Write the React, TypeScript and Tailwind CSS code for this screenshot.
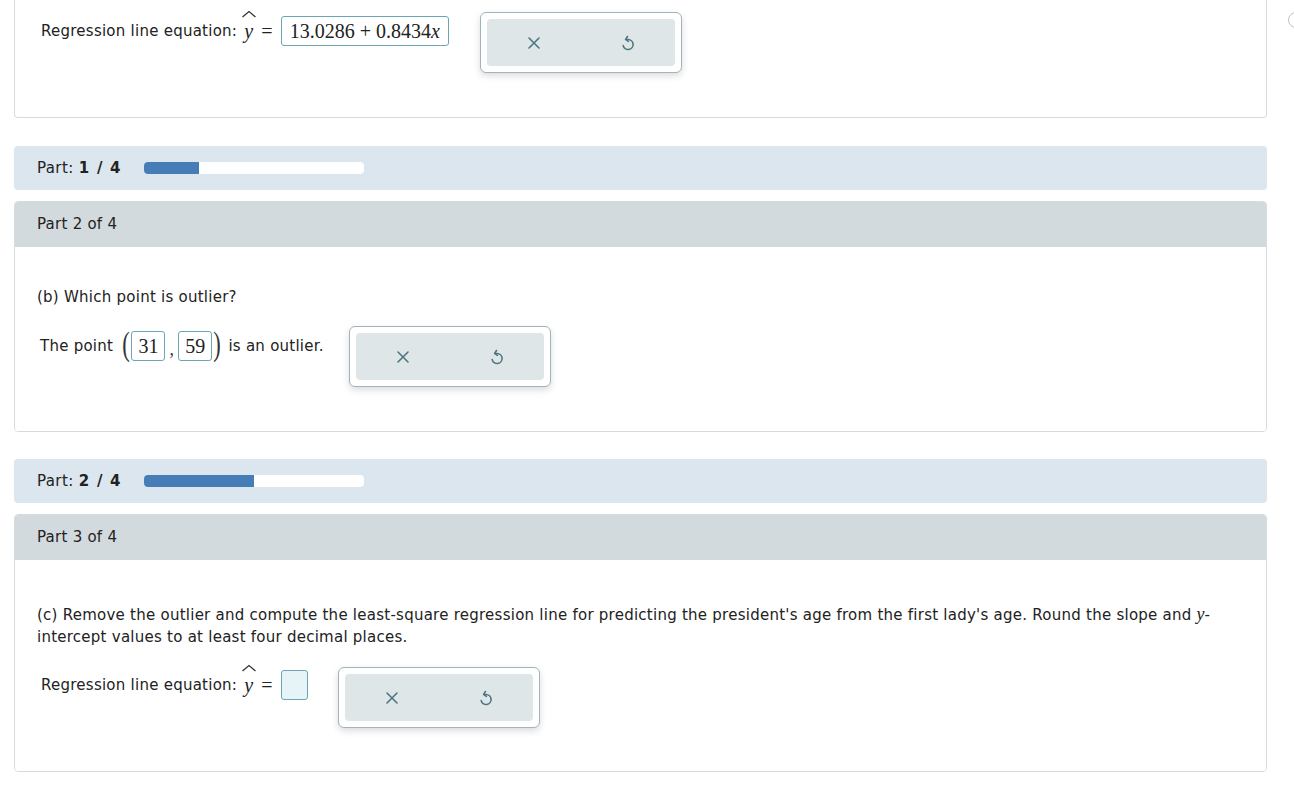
import React from 'react';

const textFont = { fontFamily: '"DejaVu Sans", Verdana, sans-serif' };
const mathFont = { fontFamily: '"Liberation Serif", "Times New Roman", serif' };

function Hat() {
  return (
    <span className="relative inline-block">
      <svg
        className="absolute left-1/2 -translate-x-1/2 -top-[6px]"
        width="15"
        height="8"
        viewBox="0 0 15 8"
        fill="none"
      >
        <path d="M1 7 L7.5 1.5 L14 7" stroke="#333" strokeWidth="1.3" />
      </svg>
      <span className="italic">y</span>
    </span>
  );
}

function YHat() {
  return (
    <span className="inline-flex items-center gap-[8px] text-[20px] text-[#222] ml-[7px] mr-[8px]" style={mathFont}>
      <Hat />
      <span>=</span>
    </span>
  );
}

function MathBox({ children, className = '' }: { children?: React.ReactNode; className?: string }) {
  return (
    <span
      className={
        'inline-flex items-center justify-center h-[30px] border-[1.5px] border-[#6aa6b6] rounded-[3px] text-[20px] text-[#222] tracking-normal ' +
        className
      }
      style={mathFont}
    >
      {children}
    </span>
  );
}

function XIcon() {
  return (
    <svg width="14" height="14" viewBox="0 0 14 14" fill="none">
      <path d="M2 2 L12 12 M12 2 L2 12" stroke="#4e7582" strokeWidth="1.6" strokeLinecap="round" />
    </svg>
  );
}

function UndoIcon() {
  return (
    <svg width="14" height="16" viewBox="0 0 14 16" fill="none">
      <path d="M5 4.5 H7 A5 5 0 1 1 2.2 10.5" stroke="#4e7582" strokeWidth="1.6" strokeLinecap="round" />
      <path
        d="M6.5 1.5 L4.6 4.4 L7.4 6.3"
        stroke="#4e7582"
        strokeWidth="1.6"
        strokeLinecap="round"
        strokeLinejoin="round"
      />
    </svg>
  );
}

function ActionBox({ className = '' }: { className?: string }) {
  return (
    <div
      className={
        'w-[202px] h-[61px] p-[6px] bg-white border border-[#9fb4bc] rounded-[6px] shadow-[0_3px_7px_rgba(0,0,0,0.14)] ' +
        className
      }
    >
      <div className="grid grid-cols-2 h-full bg-[#dfe6e8] rounded-[4px]">
        <div className="flex items-center justify-center">
          <XIcon />
        </div>
        <div className="flex items-center justify-center">
          <UndoIcon />
        </div>
      </div>
    </div>
  );
}

function Progress({ part, pct, className = '' }: { part: number; pct: number; className?: string }) {
  return (
    <div
      className={
        'flex items-center h-[44px] bg-[#dbe6ef] rounded-[4px] pl-[23px] text-[15px] tracking-[0.4px] text-[#222] ' +
        className
      }
    >
      <span className="w-[107px]">
        Part: <span className="font-bold tracking-[1.2px]">{part}&nbsp;/&nbsp;4</span>
      </span>
      <div className="w-[220px] h-[12px] bg-white rounded-[4px] overflow-hidden">
        <div className="h-full bg-[#477db7]" style={{ width: `${pct}%` }} />
      </div>
    </div>
  );
}

function PartCard({
  title,
  children,
  bodyClass,
  className = '',
}: {
  title: string;
  children: React.ReactNode;
  bodyClass: string;
  className?: string;
}) {
  return (
    <div className={'border border-[#d5dcdf] rounded-[4px] overflow-hidden ' + className}>
      <div className="h-[45px] bg-[#d2dadd] flex items-center pl-[22px] text-[15px] tracking-[0.25px] text-[#222]">
        {title}
      </div>
      <div className={'bg-white pl-[22px] pr-[22px] ' + bodyClass}>{children}</div>
    </div>
  );
}

export default function App() {
  return (
    <div className="relative w-[1294px] min-h-[795px] bg-white" style={textFont}>
      <div className="absolute left-[1288px] top-[12px] w-[16px] h-[16px] rounded-full border border-[#b9c6cc]" />
      <div className="ml-[14px] w-[1253px] flex flex-col">
        {/* top card, cut off at the top */}
        <div className="border border-t-0 border-[#d5dcdf] rounded-b-[4px] pl-[26px] pt-[12px] pb-[44px]">
          <div className="flex items-start">
            <div className="flex items-center mt-[4px] text-[15px] tracking-[0.25px] text-[#222]">
              <span>Regression line equation:</span>
              <YHat />
              <MathBox className="px-[8px]">
                13.0286 + 0.8434<span className="italic">x</span>
              </MathBox>
            </div>
            <ActionBox className="ml-[31px]" />
          </div>
        </div>

        <Progress part={1} pct={25} className="mt-[28px]" />

        <PartCard title="Part 2 of 4" bodyClass="pt-[39px] pb-[44px]" className="mt-[11px]">
          <p className="text-[15px] tracking-[0.25px] leading-[22px] text-[#222]">(b) Which point is outlier?</p>
          <div className="flex items-start mt-[18px] pl-[3px]">
            <div className="flex items-center mt-[5px] text-[15px] tracking-[0.25px] text-[#222]">
              <span>The point</span>
              <span className="flex items-center ml-[8px] text-[#333]" style={mathFont}>
                <span className="text-[30px] leading-none scale-x-75 scale-y-110 -mt-[4px]">(</span>
                <MathBox className="w-[34px]">31</MathBox>
                <span className="text-[18px] self-end -mb-[2px] mx-[4px]">,</span>
                <MathBox className="w-[34px]">59</MathBox>
                <span className="text-[30px] leading-none scale-x-75 scale-y-110 -mt-[4px]">)</span>
              </span>
              <span className="ml-[6px]">is an outlier.</span>
            </div>
            <ActionBox className="ml-[25px]" />
          </div>
        </PartCard>

        <Progress part={2} pct={50} className="mt-[27px]" />

        <PartCard title="Part 3 of 4" bodyClass="pt-[43px] pb-[43px]" className="mt-[11px]">
          <p className="text-[15px] tracking-[0.25px] leading-[22px] text-[#222]">
            (c) Remove the outlier and compute the least-square regression line for predicting the president's age from
            the first lady's age. Round the slope and{' '}
            <span className="italic text-[18px] tracking-normal" style={mathFont}>
              y
            </span>
            -<br />
            intercept values to at least four decimal places.
          </p>
          <div className="flex items-start mt-[19px] pl-[4px]">
            <div className="flex items-center mt-[3px] text-[15px] tracking-[0.25px] text-[#222]">
              <span>Regression line equation:</span>
              <YHat />
              <MathBox className="w-[27px] bg-[#e6f4f7]" />
            </div>
            <ActionBox className="ml-[30px]" />
          </div>
        </PartCard>
      </div>
    </div>
  );
}
